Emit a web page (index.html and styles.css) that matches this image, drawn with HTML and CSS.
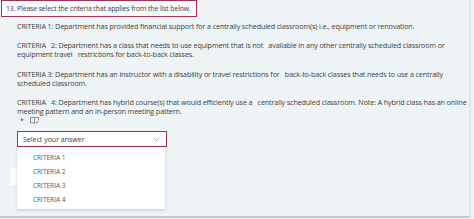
FILE: index.html
```html
<!DOCTYPE html>
<html>
<head>
<meta charset="utf-8">
<link rel="stylesheet" href="styles.css">
</head>
<body>
<div class="page">
  <div class="title">13. Please select the criteria that applies from the list below.</div>
  <div class="content">
    <p class="crit">CRITERIA 1: Department has provided financial support for a centrally scheduled classroom(s) i.e., equipment or renovation.</p>
    <p class="crit">CRITERIA&nbsp;&nbsp; 2: Department has a class that needs to use equipment that is not &nbsp; available in any other centrally scheduled classroom or equipment travel &nbsp; restrictions for back-to-back classes.</p>
    <p class="crit">CRITERIA 3: Department has an instructor with a disability or travel restrictions for &nbsp; back-to-back classes that needs to use a centrally scheduled classroom.</p>
    <p class="crit last">CRITERIA&nbsp;&nbsp; 4: Department has hybrid course(s) that would efficiently use a &nbsp; centrally scheduled classroom. Note: A hybrid class has an online meeting pattern and an in-person meeting pattern.</p>
    <div class="req">
      <span class="star">*</span>
      <svg class="reader" width="9" height="7" viewBox="0 0 9 7"><path d="M0.5 0.5h3.2c0.5 0 0.8 0.3 0.8 0.8v5.2M8.5 0.5h-3.2c-0.5 0-0.8 0.3-0.8 0.8M0.5 0.5v5.4h4M8.5 0.5v3" fill="none" stroke="#6a7278" stroke-width="0.8"/><path d="M6 4.5l1 1.6l1-1.6" fill="none" stroke="#6a7278" stroke-width="0.8"/></svg>
    </div>
    <div class="dropdown">
      <div class="select">
        <span>Select your answer</span>
        <svg class="chev" width="7" height="4" viewBox="0 0 7 4"><path d="M0.5 0.5l3 3l3-3" fill="none" stroke="#8a9196" stroke-width="0.7"/></svg>
      </div>
      <div class="under"></div>
      <ul class="list">
        <li>CRITERIA 1</li>
        <li>CRITERIA 2</li>
        <li>CRITERIA 3</li>
        <li>CRITERIA 4</li>
      </ul>
    </div>
  </div>
</div>
</body>
</html>
```
FILE: styles.css
```css
html, body {
  margin: 0;
  padding: 0;
  background: #eef4f5;
}
body {
  font-family: "Open Sans", "Noto Sans", sans-serif;
  color: #3c4043;
}
.page {
  width: 469px;
  height: 216px;
  border-right: 2px solid #dfe5e7;
  border-bottom: 2px solid #c4cacd;
  background: #eef4f5;
  position: relative;
  overflow: hidden;
}
.title {
  margin-left: 1px;
  width: 190px;
  height: 15px;
  border: 1.5px solid #a3304c;
  background: #f8fafb;
  font-size: 6.9px;
  line-height: 15px;
  padding-left: 4px;
  color: #3a3d40;
  white-space: nowrap;
  letter-spacing: -0.12px;
}
.content {
  padding: 0 0 0 17px;
  width: 453px;
}
.crit {
  margin: 0 0 10px 0;
  font-size: 7.2px;
  line-height: 9.2px;
  color: #3c3f42;
  letter-spacing: -0.13px;
}
.content .crit:first-child {
  margin-top: 5px;
}
.crit.last {
  margin-bottom: 0;
}
.req {
  height: 9px;
  display: flex;
  align-items: center;
  padding-left: 3px;
  gap: 6px;
  font-size: 7px;
  color: #555;
}
.star {
  line-height: 9px;
}
.dropdown {
  position: relative;
  margin-top: 6px;
  width: 150px;
}
.select {
  box-sizing: border-box;
  width: 150px;
  height: 16px;
  border: 1.5px solid #a3304c;
  background: #ffffff;
  display: flex;
  align-items: center;
  justify-content: space-between;
  padding: 0 6px 0 5px;
  font-size: 7px;
  color: #3c3f42;
}
.under {
  position: absolute;
  left: -7px;
  top: 37px;
  width: 12px;
  height: 17px;
  background: #ffffff;
  border-radius: 2px;
}
.list {
  position: absolute;
  left: 0;
  top: 16px;
  width: 148px;
  height: 62px;
  margin: 0;
  padding: 4px 0 0 0;
  box-sizing: border-box;
  list-style: none;
  background: #ffffff;
  box-shadow: 0 1px 3px rgba(0,0,0,0.18);
}
.list li {
  height: 14px;
  line-height: 14px;
  padding-left: 16px;
  font-size: 6.6px;
  color: #55595c;
  letter-spacing: -0.05px;
}
```
